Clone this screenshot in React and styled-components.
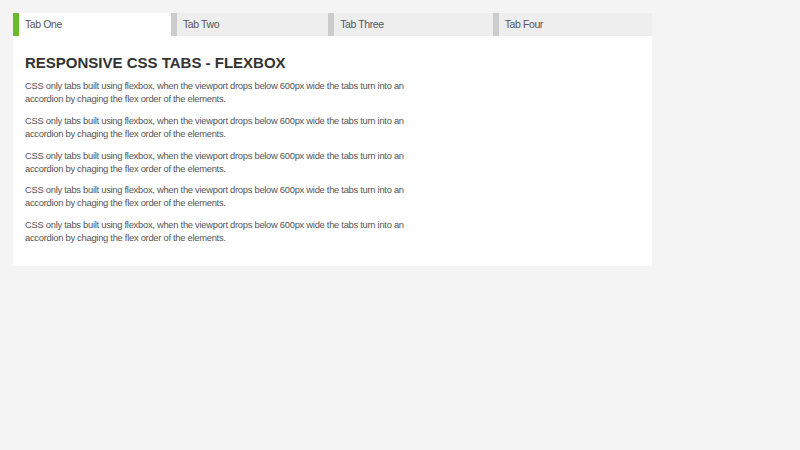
import React, { useState } from 'react';
import styled, { createGlobalStyle } from 'styled-components';

const GlobalStyle = createGlobalStyle`
  html, body {
    margin: 0;
    padding: 0;
    background: #f4f4f4;
    font-family: "Liberation Sans", Arial, sans-serif;
  }
`;

const Page = styled.div`
  padding: 13px;
  min-height: 424px;
`;

const Tabs = styled.div`
  width: 639px;
  display: flex;
  flex-wrap: wrap;
  background: #fff;
`;

const TabLabel = styled.button`
  flex: 1 1 auto;
  height: 23px;
  display: flex;
  align-items: center;
  padding: 0 12px 2px 6px;
  border: none;
  border-left: 6px solid ${(p) => (p.$active ? '#6cbb2a' : '#cccccc')};
  background: ${(p) => (p.$active ? '#fff' : '#eeeeee')};
  color: #555;
  font-family: inherit;
  font-size: 10.5px;
  letter-spacing: -0.4px;
  text-align: left;
  cursor: pointer;
`;

const Panel = styled.div`
  order: 99;
  width: 100%;
  padding: 18px 12px 13px;
  box-sizing: border-box;
  background: #fff;
`;

const Title = styled.h1`
  margin: 0 0 8px;
  font-size: 15px;
  line-height: 17px;
  font-weight: bold;
  color: #333;
`;

const Text = styled.p`
  margin: 0 0 8.75px;
  width: 395px;
  font-size: 9.4px;
  letter-spacing: -0.28px;
  line-height: 13px;
  color: #555;
`;

const tabs = ['Tab One', 'Tab Two', 'Tab Three', 'Tab Four'];
const copy =
  'CSS only tabs built using flexbox, when the viewport drops below 600px wide the tabs turn into an accordion by chaging the flex order of the elements.';

const App = () => {
  const [active, setActive] = useState(0);

  return (
    <Page>
      <GlobalStyle />
      <Tabs>
        {tabs.map((t, i) => (
          <TabLabel key={t} $active={active === i} onClick={() => setActive(i)}>
            {t}
          </TabLabel>
        ))}
        <Panel>
          <Title>RESPONSIVE CSS TABS - FLEXBOX</Title>
          {[0, 1, 2, 3, 4].map((n) => (
            <Text key={n}>{copy}</Text>
          ))}
        </Panel>
      </Tabs>
    </Page>
  );
};

export default App;
